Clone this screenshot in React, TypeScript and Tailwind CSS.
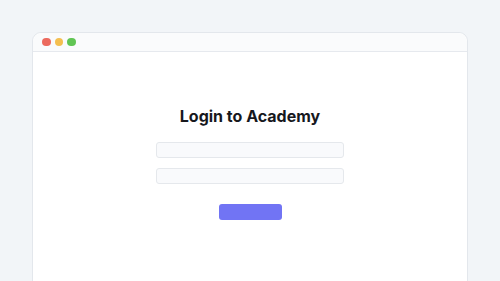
export default function App() {
  return (
    <div className="w-[500px] h-[281px] bg-[#f2f5f8] pt-[32px] px-[32px] overflow-hidden" style={{ fontFamily: "Inter, 'Liberation Sans', sans-serif" }}>
      <div className="w-[436px] h-[260px] bg-white border border-[#e3e7ec] rounded-t-[9px] flex flex-col">
        <div className="h-[19px] flex items-center gap-[4px] pl-[9px] bg-[#fafbfc] rounded-t-[9px] border-b border-[#e6e9ee]">
          <span className="w-[8.5px] h-[8.5px] rounded-full bg-[#ec6a5e]" />
          <span className="w-[8.5px] h-[8.5px] rounded-full bg-[#f4bf4f]" />
          <span className="w-[8.5px] h-[8.5px] rounded-full bg-[#61c554]" />
        </div>
        <div className="flex flex-col items-center pt-[53px]">
          <h1 className="text-[16px] leading-[22px] font-bold text-[#16181d]">Login to Academy</h1>
          <div className="mt-[15px] w-[188px] h-[16px] rounded-[3px] border border-[#e5e8ec] bg-[#f9fafc]" />
          <div className="mt-[10px] w-[188px] h-[16px] rounded-[3px] border border-[#e5e8ec] bg-[#f9fafc]" />
          <button className="mt-[20px] w-[63px] h-[16px] rounded-[3px] bg-[#7174f4]" />
        </div>
      </div>
    </div>
  );
}
